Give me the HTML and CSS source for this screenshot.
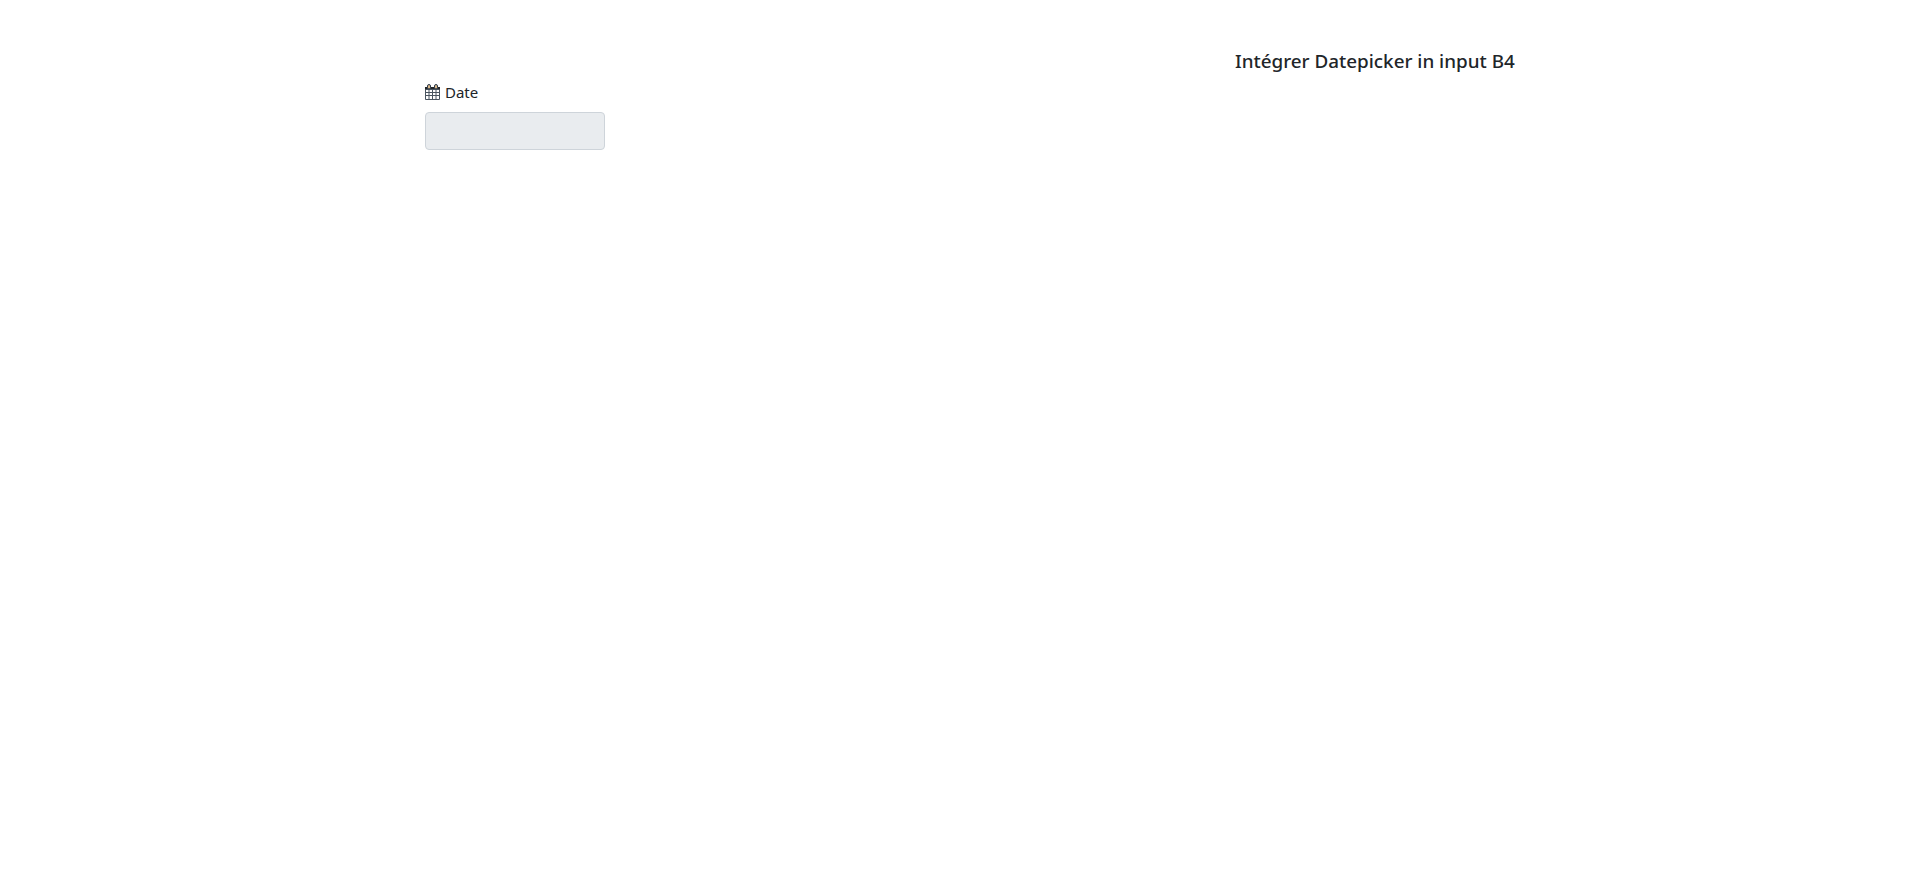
FILE: index.html
```html
<!DOCTYPE html>
<html lang="fr">
<head>
<meta charset="utf-8">
<title>Intégrer Datepicker in input B4</title>
<link rel="stylesheet" href="styles.css">
</head>
<body>
<main class="page">
  <h1 class="title">Intégrer Datepicker in input B4</h1>
  <div class="field">
    <label class="label" for="date">
      <svg class="cal" viewBox="0 0 15 16" width="15" height="16" aria-hidden="true">
        <path class="cal-top" d="M0 3h15v3H0z"/>
        <path class="cal-grid" d="M0.5 5.5h14v10H0.5zM0.5 8.5h14M0.5 11.5h14M4 5.5v10M7.5 5.5v10M11 5.5v10"/>
        <rect class="cal-ring" x="2.5" y="0.5" width="3" height="4.5" rx="1.5"/>
        <rect class="cal-ring" x="9.5" y="0.5" width="3" height="4.5" rx="1.5"/>
      </svg>
      <span>Date</span>
    </label>
    <input class="input" id="date" type="text" disabled>
  </div>
</main>
</body>
</html>
```
FILE: styles.css
```css
* { box-sizing: border-box; }
html, body { margin: 0; background: #fff; }
body {
  font-family: "Noto Sans", "Open Sans", "Liberation Sans", sans-serif;
  color: #212529;
  height: 880px;
}
.page {
  width: 1140px;
  margin: 0 auto;
  padding: 48px 35px 0;
}
.title {
  margin: 0 0 5px;
  padding-left: 810px;
  font-size: 18.85px;
  line-height: 27px;
  font-weight: 500;
  white-space: nowrap;
}
.field { display: flex; flex-direction: column; align-items: flex-start; }
.label {
  display: flex;
  align-items: center;
  gap: 5px;
  height: 24px;
  margin-bottom: 8px;
  font-size: 15px;
  line-height: 24px;
  font-weight: 400;
}
.cal { display: block; }
.cal-top { fill: #212529; }
.cal-grid { fill: none; stroke: #4a5560; stroke-width: 1; }
.cal-ring { fill: #d9b98c; stroke: #2d3a4a; stroke-width: 1; }
.input {
  display: block;
  width: 180px;
  height: 38px;
  background: #e9ecef;
  border: 1px solid #ced4da;
  border-radius: 4px;
  padding: 6px 12px;
}
```
